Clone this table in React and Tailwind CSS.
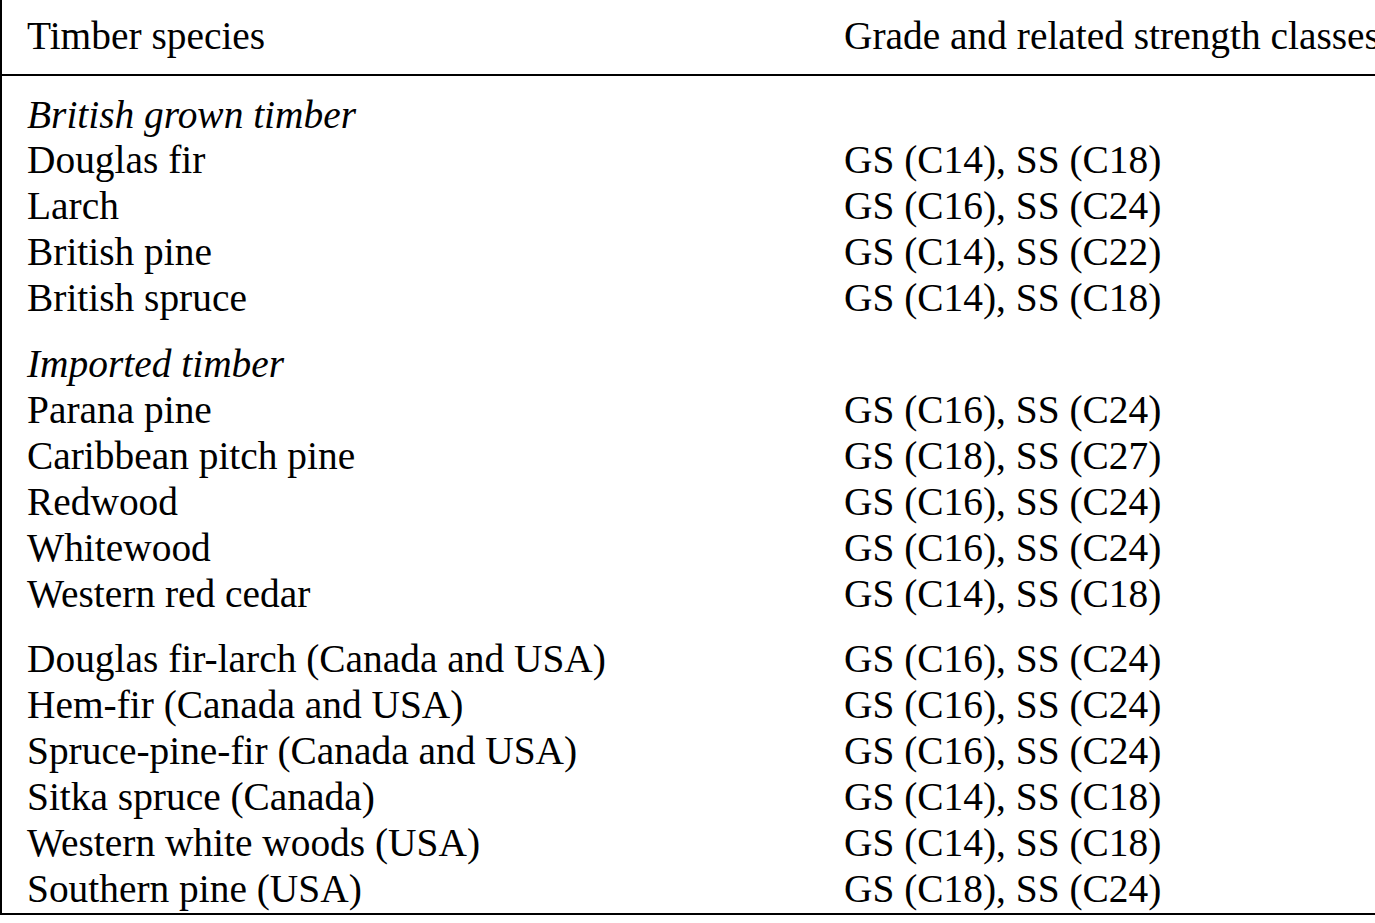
import React from 'react';

const groups = [
  {
    title: 'British grown timber',
    gap: '',
    titleH: 'h-[44px] leading-[44px]',
    rows: [
      ['Douglas fir', 'GS (C14), SS (C18)'],
      ['Larch', 'GS (C16), SS (C24)'],
      ['British pine', 'GS (C14), SS (C22)'],
      ['British spruce', 'GS (C14), SS (C18)'],
    ],
  },
  {
    title: 'Imported timber',
    gap: 'mt-[20px]',
    titleH: 'h-[46px] leading-[46px]',
    rows: [
      ['Parana pine', 'GS (C16), SS (C24)'],
      ['Caribbean pitch pine', 'GS (C18), SS (C27)'],
      ['Redwood', 'GS (C16), SS (C24)'],
      ['Whitewood', 'GS (C16), SS (C24)'],
      ['Western red cedar', 'GS (C14), SS (C18)'],
    ],
  },
  {
    title: null,
    gap: 'mt-[19px]',
    rows: [
      ['Douglas fir-larch (Canada and USA)', 'GS (C16), SS (C24)'],
      ['Hem-fir (Canada and USA)', 'GS (C16), SS (C24)'],
      ['Spruce-pine-fir (Canada and USA)', 'GS (C16), SS (C24)'],
      ['Sitka spruce (Canada)', 'GS (C14), SS (C18)'],
      ['Western white woods (USA)', 'GS (C14), SS (C18)'],
      ['Southern pine (USA)', 'GS (C18), SS (C24)'],
    ],
  },
];

function Row({ species, grade }) {
  return (
    <div className="grid grid-cols-[817px_1fr] h-[46px] leading-[46px] whitespace-nowrap">
      <div>{species}</div>
      <div>{grade}</div>
    </div>
  );
}

export default function App() {
  return (
    <div className="w-[1375px] h-[923px] overflow-hidden bg-white text-black font-['Liberation_Serif',_'Times_New_Roman',_serif] text-[39.4px]">
      <div className="w-[1420px] border-l-2 border-b-2 border-black">
        {/* header, right heading runs past the edge like the original */}
        <div className="h-[76px] border-b-2 border-black pl-[25px] pt-[13px]">
          <div className="grid grid-cols-[817px_1fr] h-[46px] leading-[46px] whitespace-nowrap">
            <div>Timber species</div>
            <div>Grade and related strength classes</div>
          </div>
        </div>

        <div className="pl-[25px] pt-[17px] pb-[1px] flex flex-col">
          {groups.map((g, i) => (
            <div key={i} className={g.gap}>
              {g.title && (
                <div className={`${g.titleH} italic whitespace-nowrap`}>{g.title}</div>
              )}
              {g.rows.map(([s, gr]) => (
                <Row key={s} species={s} grade={gr} />
              ))}
            </div>
          ))}
        </div>
      </div>
    </div>
  );
}
